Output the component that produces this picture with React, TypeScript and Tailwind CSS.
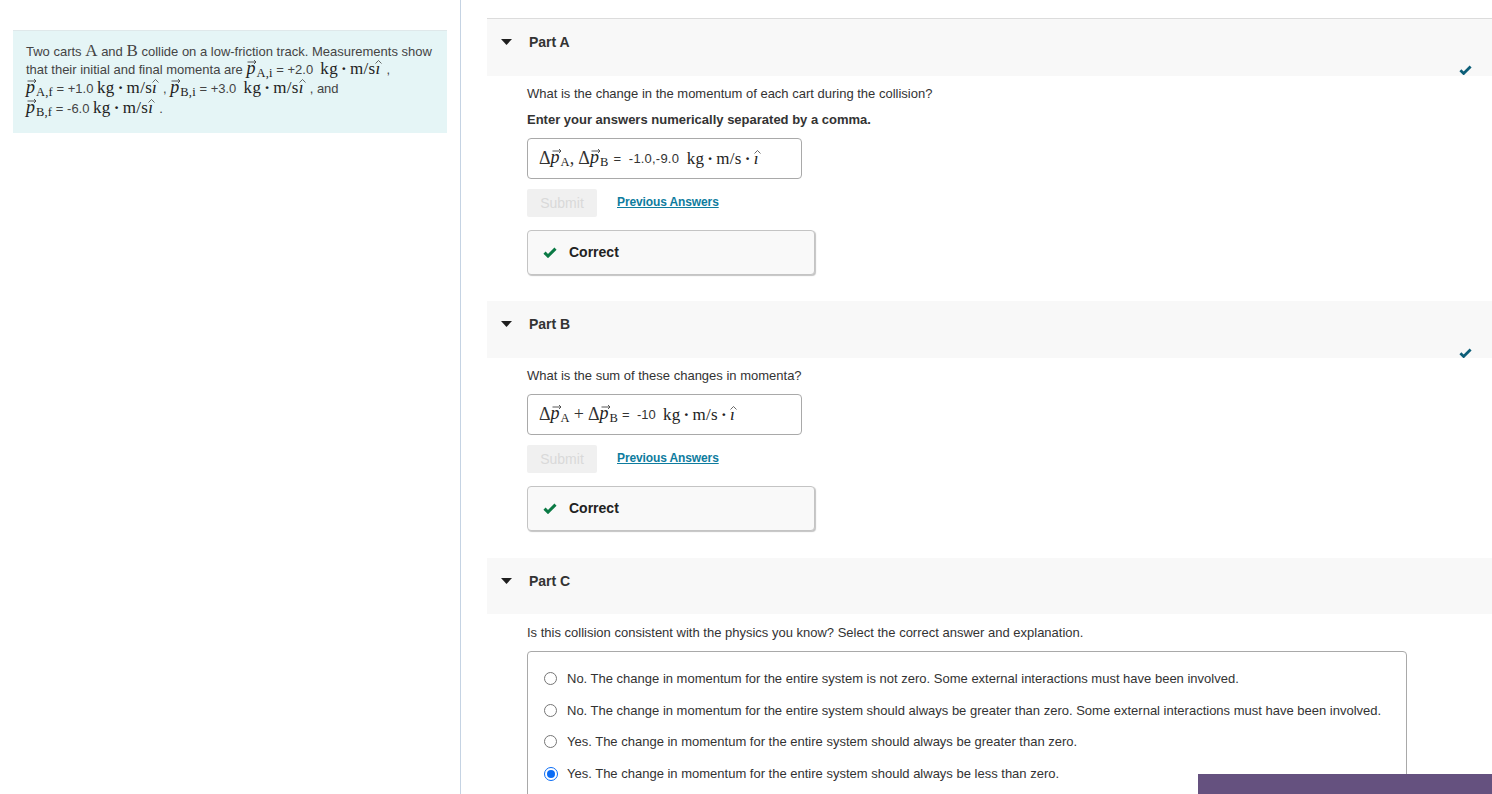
import React from "react";

const serif = "font-['Liberation_Serif','DejaVu_Serif',serif]";

function Vec({ c = "p" }: { c?: string }) {
  return (
    <span className={`relative inline-block italic ${serif} text-[18px] leading-none w-[10px] text-[#222]`}>
      {c}
      <svg className="absolute left-[1px] top-[0px]" width="10" height="5" viewBox="0 0 10 5" fill="none" stroke="#444" strokeWidth="0.9">
        <path d="M0.5 3H9M7 1L9 3L7 5" />
      </svg>
    </span>
  );
}

function Sub({ children }: { children: React.ReactNode }) {
  return <span className={`${serif} text-[12.5px] leading-none relative top-[3px] tracking-[0.2px] text-[#222]`}>{children}</span>;
}

function Hat() {
  return (
    <span className={`relative inline-block italic ${serif} leading-none w-[6px]`}>
      ı
      <svg className="absolute left-[0px] top-[0px]" width="7" height="4" viewBox="0 0 7 4" fill="none" stroke="#444" strokeWidth="0.8">
        <path d="M0.5 3.5L3.5 0.5L6.5 3.5" />
      </svg>
    </span>
  );
}

function Unit({ dot = false }: { dot?: boolean }) {
  return (
    <span className={`${serif} text-[17px] leading-none tracking-[0.3px] text-[#222]`}>
      kg<span className="font-bold mx-[3px]">·</span>m/s
      {dot && <span className="font-bold mx-[3px]">·</span>}
      <Hat />
    </span>
  );
}

function P({ sub }: { sub: string }) {
  return (
    <span className="whitespace-nowrap">
      <Vec />
      <Sub>{sub}</Sub>
    </span>
  );
}

function Check({ color, size = 14 }: { color: string; size?: number }) {
  return (
    <svg width={size} height={size * 0.8} viewBox="0 0 14 11" fill="none">
      <path d="M1.5 5.5L5 9L12.5 1.5" stroke={color} strokeWidth="3" />
    </svg>
  );
}

function PartHeader({ label, heightClass }: { label: string; heightClass: string }) {
  return (
    <div className={`relative bg-[#f8f8f8] flex items-start pl-[14px] ${heightClass}`}>
      <svg className="mt-[20px]" width="11" height="6" viewBox="0 0 11 6"><path d="M0 0H11L5.5 6Z" fill="#1f1f1f" /></svg>
      <span className="ml-[17px] mt-[14px] text-[14px] leading-[18px] font-bold text-[#333]">{label}</span>
    </div>
  );
}

function Answer({ children }: { children: React.ReactNode }) {
  return (
    <div className="w-[275px] h-[41px] rounded-[4px] border border-[#a9a9a9] flex items-center pl-[11px] text-[13px] text-[#333] whitespace-nowrap">
      {children}
    </div>
  );
}

function Actions() {
  return (
    <div className="flex items-center mt-[10px]">
      <button className="w-[70px] h-[28px] bg-[#f0f0f0] rounded-[2px] text-[14px] text-[#d9d9d9]">Submit</button>
      <a className="ml-[20px] -mt-[2px] text-[12px] tracking-[-0.12px] font-bold text-[#0e7c9e] underline">Previous Answers</a>
    </div>
  );
}

function Correct() {
  return (
    <div className="mt-[13px] w-[288px] h-[45px] rounded-[4px] border border-[#c4c4c4] bg-[#f9f9f9] shadow-[1px_1px_1px_#c4c4c4] flex items-center pl-[15px]">
      <Check color="#0b7a45" />
      <span className="ml-[12px] text-[14px] font-bold text-[#222]">Correct</span>
    </div>
  );
}

const options = [
  "No. The change in momentum for the entire system is not zero. Some external interactions must have been involved.",
  "No. The change in momentum for the entire system should always be greater than zero. Some external interactions must have been involved.",
  "Yes. The change in momentum for the entire system should always be greater than zero.",
  "Yes. The change in momentum for the entire system should always be less than zero.",
];

export default function App() {
  return (
    <div className="relative h-[794px] overflow-hidden bg-white flex font-['Liberation_Sans',Arial,sans-serif] text-[#333]">
      <aside className="w-[461px] shrink-0 border-r border-[#c5d3e3] pt-[30px] pl-[13px] pr-[13px]">
        <div className="h-[103px] bg-[#e5f5f6] border-t border-[#dfe8ea] pl-[13px] pr-[8px] pt-[11px] text-[13px] leading-[18.5px] text-[#444]">
          <div className="h-[18.5px] whitespace-nowrap">
            Two carts <span className={`${serif} text-[17px] leading-none`}>A</span> and <span className={`${serif} text-[17px] leading-none`}>B</span> collide on a low-friction track. Measurements show
          </div>
          <div className="h-[18.5px] -mt-[2px] mb-[2px] whitespace-nowrap">
            that their initial and final momenta are <P sub="A,i" /> = +2.0 &nbsp;<Unit /><span className="ml-[5px]">,</span>
          </div>
          <div className="h-[18.5px] -mt-[1px] mb-[1px] whitespace-nowrap">
            <P sub="A,f" /> = +1.0 <Unit /><span className="ml-[5px]">,</span> <P sub="B,i" /> = +3.0 &nbsp;<Unit /><span className="ml-[5px]">,</span> and
          </div>
          <div className="h-[18.5px] whitespace-nowrap">
            <P sub="B,f" /> = -6.0 <Unit /><span className="ml-[5px]">.</span>
          </div>
        </div>
      </aside>

      <main className="flex-1 pl-[26px] pt-[18px]">
        <div className="border-t border-[#dcdcdc]">
          <PartHeader label="Part A" heightClass="h-[57px]" />
          <div className="relative pl-[40px]">
            <div className="absolute right-[20px] -top-[20px]"><Check color="#0c5e78" size={13} /></div>
            <p className="mt-[9px] text-[13px] leading-[18px]">What is the change in the momentum of each cart during the collision?</p>
            <p className="mt-[8px] mb-[9px] text-[13px] leading-[18px] font-bold">Enter your answers numerically separated by a comma.</p>
            <Answer>
              <span className={`${serif} text-[18px]`}>Δ</span><P sub="A" /><span className={`${serif} text-[18px] mr-[4px]`}>,</span><span className={`${serif} text-[18px]`}>Δ</span><P sub="B" />
              <span className="ml-[5px] whitespace-pre tracking-[0.2px]">=  -1.0,-9.0  </span><Unit dot />
            </Answer>
            <Actions />
            <Correct />
          </div>
        </div>

        <div className="mt-[26px]">
          <PartHeader label="Part B" heightClass="h-[57px]" />
          <div className="relative pl-[40px]">
            <div className="absolute right-[20px] -top-[19px]"><Check color="#0c5e78" size={13} /></div>
            <p className="mt-[9px] mb-[9px] text-[13px] leading-[18px]">What is the sum of these changes in momenta?</p>
            <Answer>
              <span className={`${serif} text-[18px]`}>Δ</span><P sub="A" /><span className={`${serif} text-[18px] mx-[4px]`}>+</span><span className={`${serif} text-[18px]`}>Δ</span><P sub="B" />
              <span className="ml-[4px] whitespace-pre">=  -10  </span><Unit dot />
            </Answer>
            <Actions />
            <Correct />
          </div>
        </div>

        <div className="mt-[27px]">
          <PartHeader label="Part C" heightClass="h-[56px]" />
          <div className="pl-[40px]">
            <p className="mt-[10px] mb-[9px] text-[13px] leading-[18px]">Is this collision consistent with the physics you know? Select the correct answer and explanation.</p>
            <div className="w-[880px] h-[200px] rounded-[4px] border border-[#a9a9a9] pl-[16px] pt-[11px]">
              {options.map((o, i) => (
                <div key={o} className="flex items-center h-[31.6px]">
                  {i === 3 ? (
                    <span className="shrink-0 w-[14px] h-[14px] rounded-full border-[1.5px] border-[#0a6cf5] flex items-center justify-center"><span className="w-[8px] h-[8px] rounded-full bg-[#0a6cf5]" /></span>
                  ) : (
                    <span className="shrink-0 -ml-[0.5px] mr-[1.5px] w-[13px] h-[13px] rounded-full border-[1.5px] border-[#767676]" />
                  )}
                  <span className="ml-[9px] text-[13px] whitespace-nowrap">{o}</span>
                </div>
              ))}
            </div>
          </div>
        </div>
      </main>

      <div className="absolute right-0 bottom-0 w-[294px] h-[20px] bg-[#65517f]" />
    </div>
  );
}
